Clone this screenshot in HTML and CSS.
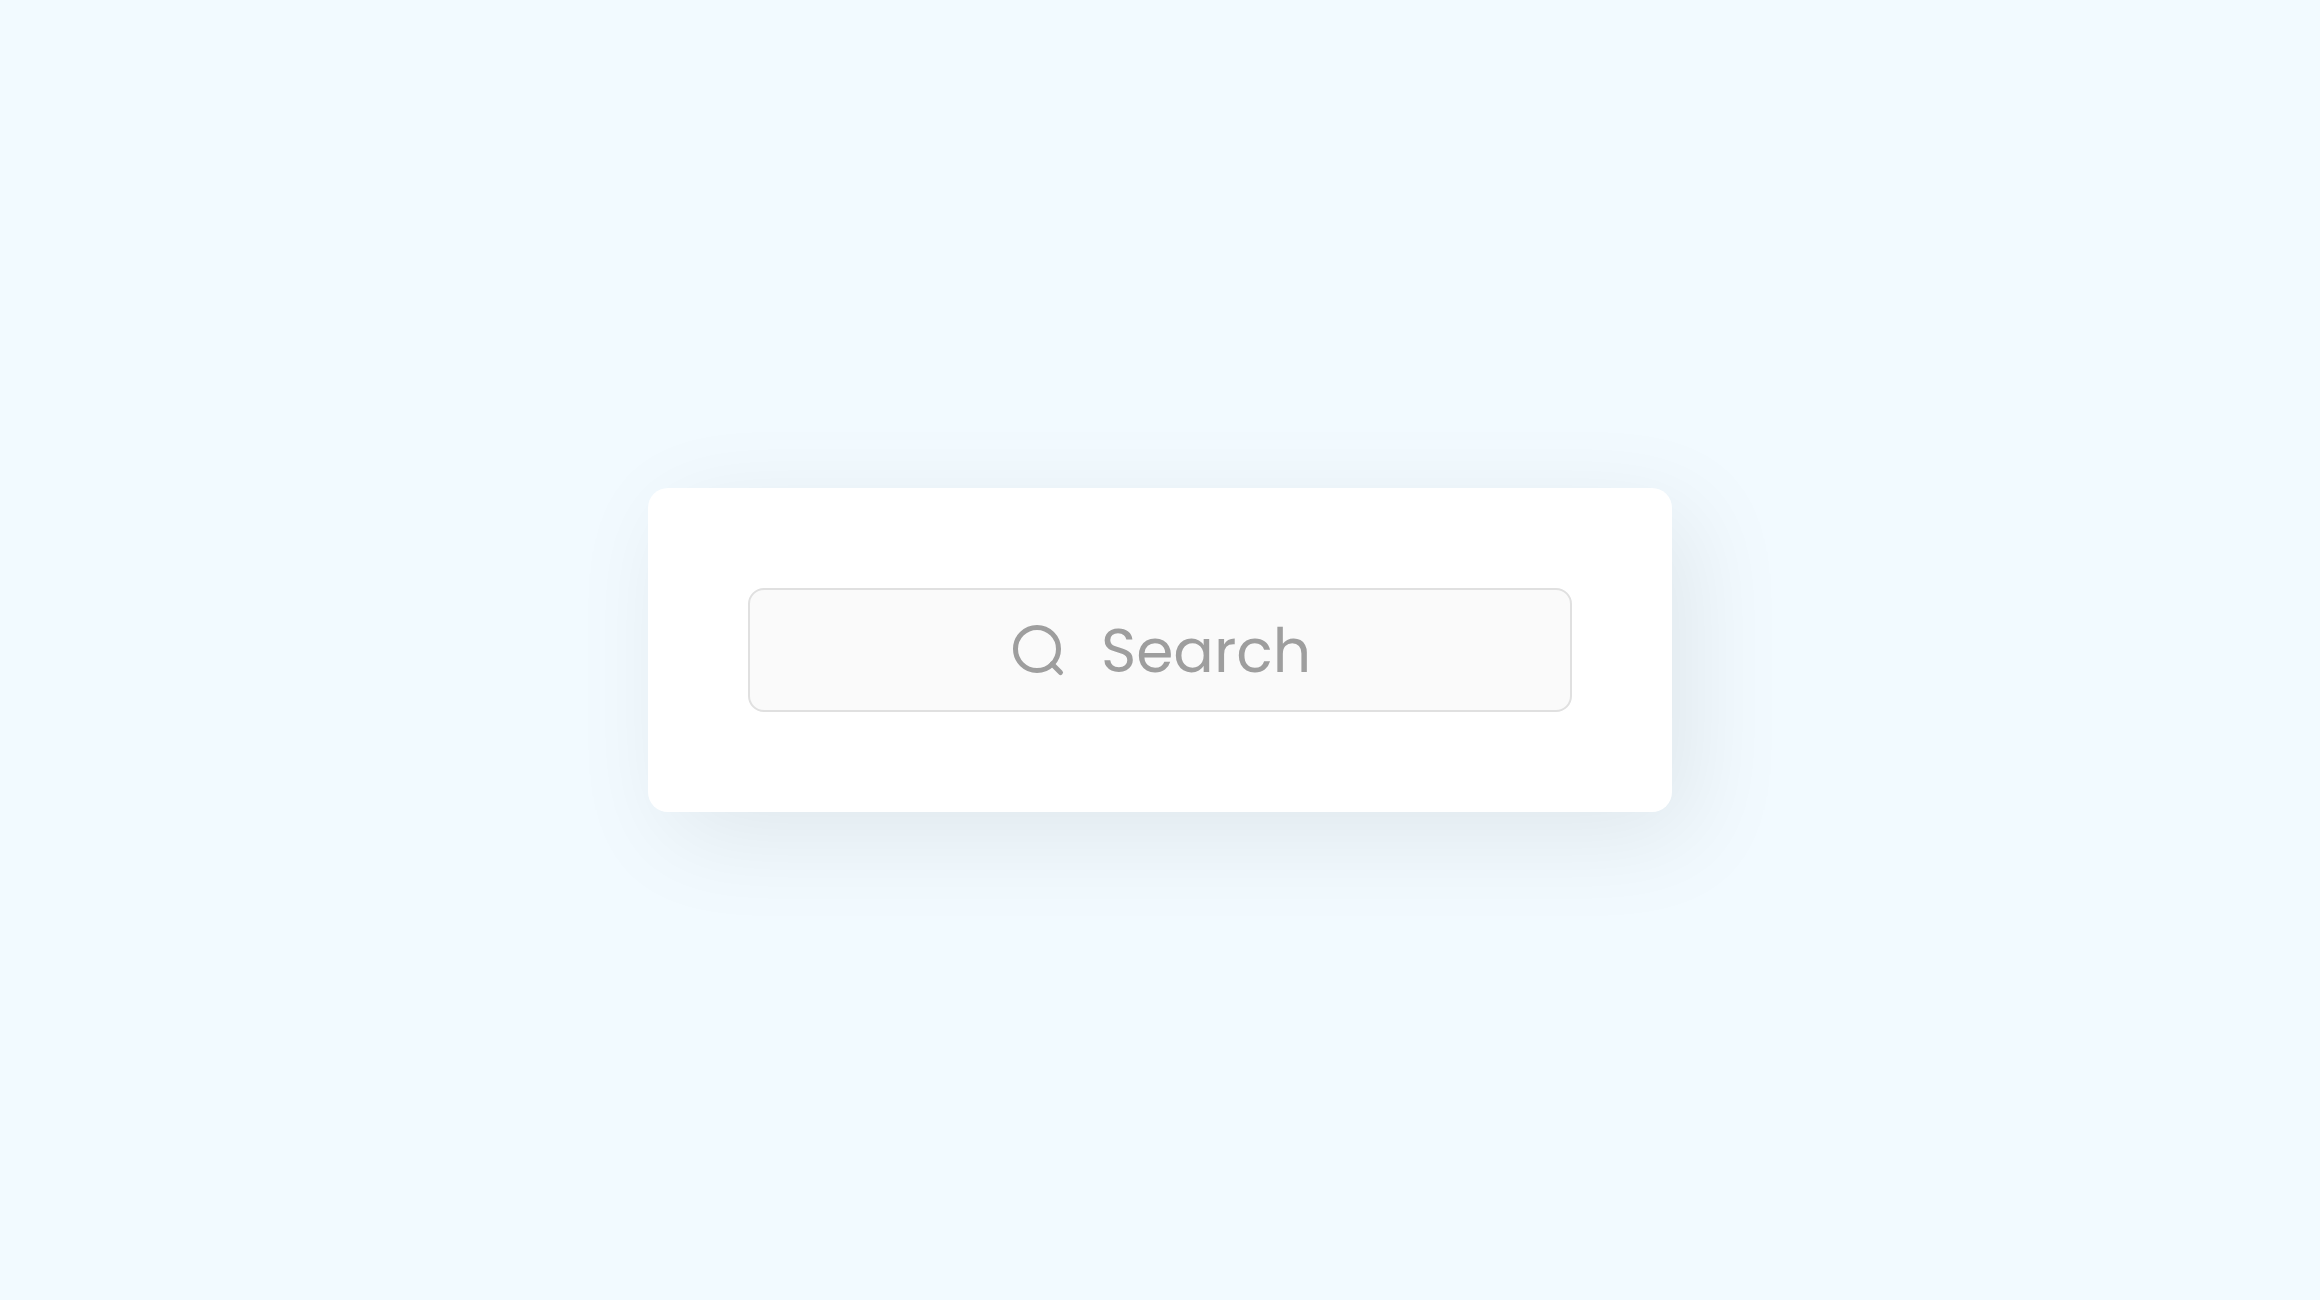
FILE: index.html
```html
<!DOCTYPE html>
<html lang="en">
<head>
    <meta charset="UTF-8">
    <meta name="viewport" content="width=device-width, initial-scale=1.0">
    <title>Search</title>
    <link rel="stylesheet" href="styles.css">
</head>

<body>

    <form class="card" role="search">
        <label class="search-bar" for="search">
            <svg class="search-icon" viewBox="0 0 60 60" role="img" aria-label="Search">
                <circle cx="28" cy="29" r="21.5"></circle>
                <path d="M43 44L51.5 52.5"></path>
            </svg>
            <input class="search-input" type="text" id="search" name="search" placeholder="Search">
        </label>
    </form>

</body>

</html>
```
FILE: styles.css
```css
* {
    box-sizing: border-box;
}

body {
    margin: 0;
    min-height: 100vh;
    display: flex;
    align-items: center;
    justify-content: center;
    background-color: #f2faff;
    font-family: Poppins, Inter, sans-serif;
}

.card {
    width: 100%;
    max-width: 1024px;
    padding: 100px;
    border-radius: 20px;
    background-color: white;
    box-shadow: 20px 24px 100px rgba(0, 0, 0, 0.08);
}

.search-bar {
    display: flex;
    align-items: center;
    justify-content: center;
    gap: 32px;
    padding: 15px;
    border: 2px solid #e0e0e0;
    border-radius: 16px;
    background-color: #fafafa;
    cursor: text;
}

.search-icon {
    flex: none;
    width: 60px;
    height: 60px;
    fill: none;
    stroke: #9e9e9e;
    stroke-width: 5;
    stroke-linecap: round;
}

.search-input {
    field-sizing: content;
    min-width: 0;
    height: 90px;
    padding: 2px 0 0;
    border: none;
    outline: none;
    background: none;
    color: #9e9e9e;
    font-family: inherit;
    font-size: 60px;
    /* single-storey a */
    font-feature-settings: "cv11";
}

.search-input::placeholder {
    color: #9e9e9e;
    opacity: 1;
}
```
